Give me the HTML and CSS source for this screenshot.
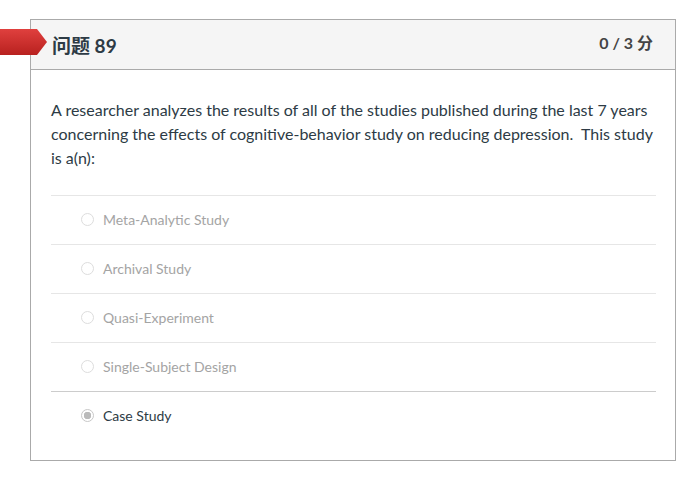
FILE: index.html
```html
<!DOCTYPE html>
<html lang="zh">

<head>
    <meta charset="UTF-8">
    <title>问题 89</title>
    <link rel="stylesheet" href="styles.css">
</head>

<body>

    <div class="question">
        <div class="flag"></div>
        <div class="q-header">
            <span class="q-name">问题 89</span>
            <span class="q-points">0 / 3 分</span>
        </div>

        <div class="q-body">
            <p class="q-text">A researcher analyzes the results of all of the studies published during the last 7 years
                concerning the effects of cognitive-behavior study on reducing depression.&nbsp; This study is a(n):</p>

            <div class="answers">
                <div class="answer">
                    <span class="radio"></span>
                    <span class="answer-text">Meta-Analytic Study</span>
                </div>
                <div class="answer">
                    <span class="radio"></span>
                    <span class="answer-text">Archival Study</span>
                </div>
                <div class="answer">
                    <span class="radio"></span>
                    <span class="answer-text">Quasi-Experiment</span>
                </div>
                <div class="answer">
                    <span class="radio"></span>
                    <span class="answer-text">Single-Subject Design</span>
                </div>
                <div class="answer selected">
                    <span class="radio"></span>
                    <span class="answer-text">Case Study</span>
                </div>
            </div>
        </div>
    </div>

</body>

</html>
```

FILE: styles.css
```css
* {
    margin: 0;
    padding: 0;
    box-sizing: border-box;
}

body {
    background: #fff;
    font-family: Lato, "Noto Sans CJK SC", sans-serif;
    color: #2d3b45;
    padding: 19px 0 0 30px;
}

.question {
    position: relative;
    width: 646px;
    border: 1px solid #aaa;
    background: #fff;
}

/* roter Pfeil links, ragt über den Rand */
.flag {
    position: absolute;
    top: 9px;
    left: -31px;
    width: 47px;
    height: 26px;
    background: linear-gradient(180deg, #e0403e, #b8211f);
    clip-path: polygon(0 0, 37px 0, 47px 13px, 37px 26px, 0 26px);
}

.q-header {
    display: flex;
    justify-content: space-between;
    align-items: center;
    height: 50px;
    padding: 0 22px 0 21px;
    background: #f5f5f5;
    border-bottom: 1px solid #aaa;
}

.q-name {
    font-size: 19px;
    font-weight: 700;
}

.q-points {
    font-size: 16px;
    font-weight: 700;
    color: #444;
    margin-top: -6px;
}

.q-body {
    padding: 28px 19px 20px 20px;
}

.q-text {
    font-size: 16px;
    line-height: 24px;
    margin-bottom: 25px;
}

.answer {
    display: flex;
    align-items: center;
    height: 49px;
    border-top: 1px solid #e6e6e6;
    padding-left: 30px;
    padding-bottom: 2px;
}

.answer:last-child {
    border-top-color: #ccc;
}

.radio {
    width: 13px;
    height: 13px;
    border: 1px solid #ddd;
    border-radius: 50%;
    background: #fff;
    margin-right: 9px;
}

.answer-text {
    font-size: 14px;
    color: #a4a4a4;
}

.selected .radio {
    border-color: #c8c8c8;
    background: radial-gradient(circle, #bbb 0 3.5px, #fff 4px);
}

.selected .answer-text {
    color: #2d3b45;
}
```
